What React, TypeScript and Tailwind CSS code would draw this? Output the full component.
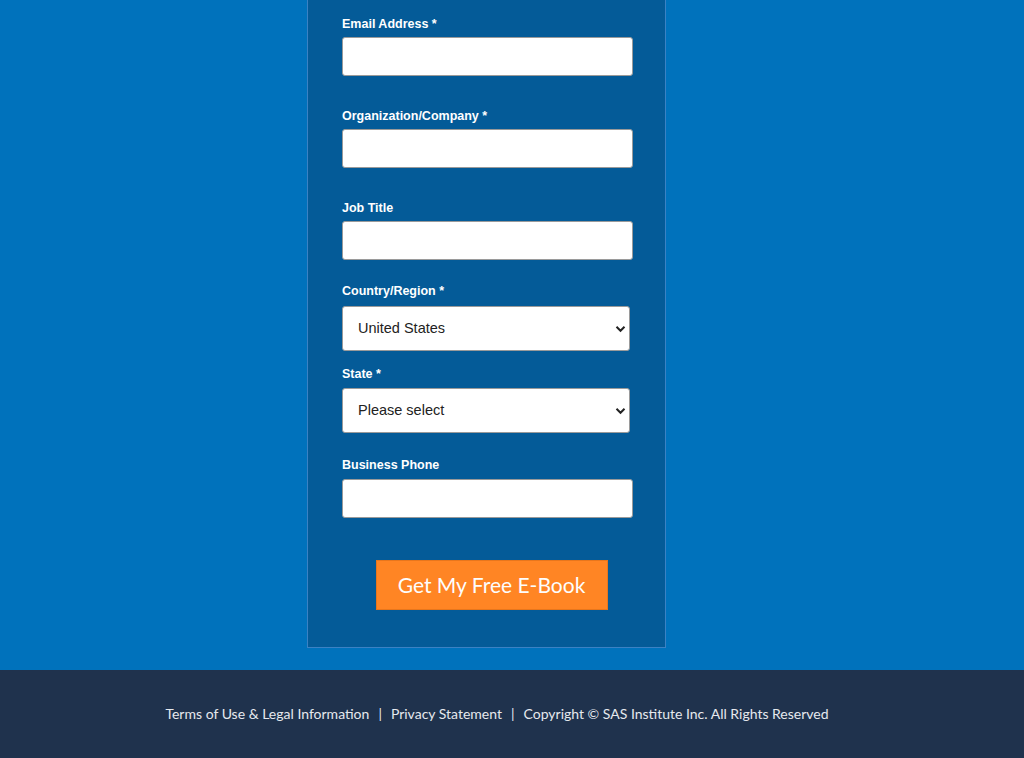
import React from 'react';

const labelCls = "block text-[12.5px] leading-4 font-bold text-white";
const inputCls = "block w-[291px] h-[39px] bg-white border border-[#9a9a9a] rounded-[3px] px-2 text-[14px] text-[#222] outline-none";

function Chevron() {
  return (
    <svg className="absolute right-[4px] top-1/2 -translate-y-1/2 pointer-events-none" width="11" height="8" viewBox="0 0 11 8">
      <path d="M1.5 1.8 L5.5 5.8 L9.5 1.8" fill="none" stroke="#222" strokeWidth="2" />
    </svg>
  );
}

function SelectField({ value, options }: { value: string; options: string[] }) {
  return (
    <div className="relative w-[288px]">
      <select
        defaultValue={value}
        className="block w-[288px] h-[45px] appearance-none bg-white border border-[#9a9a9a] rounded-[3px] pl-[15px] pr-6 text-[14.5px] text-[#222] outline-none"
      >
        {options.map(o => <option key={o}>{o}</option>)}
      </select>
      <Chevron />
    </div>
  );
}

export default function App() {
  return (
    <div className="min-h-[758px] bg-[#0072bc] flex flex-col" style={{ fontFamily: '"Liberation Sans", Arial, sans-serif' }}>
      <div className="flex pl-[307px]">
        <div className="w-[359px] bg-[#045b98] border-x border-b border-[#3b82c4] pl-[34px] pt-[16px] pb-[37px]">
          <label className={labelCls}>Email Address *</label>
          <input className={`${inputCls} mt-[5px]`} />

          <label className={`${labelCls} mt-[32px]`}>Organization/Company *</label>
          <input className={`${inputCls} mt-[5px]`} />

          <label className={`${labelCls} mt-[32px]`}>Job Title</label>
          <input className={`${inputCls} mt-[5px]`} />

          <label className={`${labelCls} mt-[23px]`}>Country/Region *</label>
          <div className="mt-[7px]">
            <SelectField value="United States" options={['United States', 'Canada', 'United Kingdom']} />
          </div>

          <label className={`${labelCls} mt-[15px]`}>State *</label>
          <div className="mt-[6px]">
            <SelectField value="Please select" options={['Please select', 'Alabama', 'Alaska', 'North Carolina']} />
          </div>

          <label className={`${labelCls} mt-[24px]`}>Business Phone</label>
          <input className={`${inputCls} mt-[6px]`} />

          <div className="mt-[42px] pr-[34px] flex justify-center">
            <button
              className="w-[232px] h-[50px] bg-[#ff8524] border border-[#e8761c] text-[#fdfdfd] text-[21px] ml-[10px]"
              style={{ fontFamily: 'Lato, "Noto Sans", sans-serif' }}
            >
              Get My Free E-Book
            </button>
          </div>
        </div>
      </div>

      <div className="h-[22px]" />

      <footer
        className="h-[88px] bg-[#1f324d] flex items-center justify-center text-[14px] text-[#e6e9ee] pb-[2px] pr-[30px]"
        style={{ fontFamily: 'Lato, "Noto Sans", sans-serif' }}
      >
        <span>Terms of Use &amp; Legal Information</span>
        <span className="mx-[9px]">|</span>
        <span>Privacy Statement</span>
        <span className="mx-[9px]">|</span>
        <span>Copyright © SAS Institute Inc. All Rights Reserved</span>
      </footer>
    </div>
  );
}
